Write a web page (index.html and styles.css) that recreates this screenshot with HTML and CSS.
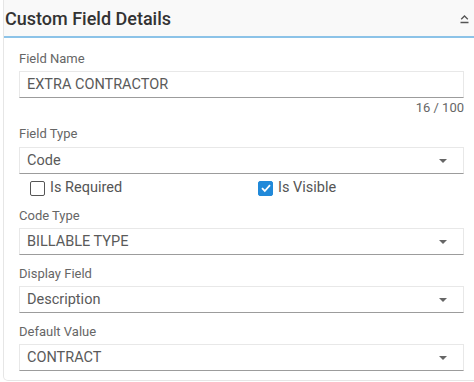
FILE: index.html
```html
<!DOCTYPE html>
<html lang="en">
<head>
<meta charset="utf-8">
<title>Custom Field Details</title>
<link rel="stylesheet" href="styles.css">
</head>
<body>
<section class="panel">
  <header class="panel-header">
    <h2 class="panel-title">Custom Field Details</h2>
    <button class="collapse" type="button" aria-label="Collapse">
      <svg width="9" height="10" viewBox="0 0 9 10"><polyline points="1.2,5.2 4.5,2 7.8,5.2" fill="none" stroke="#555" stroke-width="1.3"/><line x1="0.5" y1="8.5" x2="8.5" y2="8.5" stroke="#555" stroke-width="1.5"/></svg>
    </button>
  </header>
  <div class="panel-body">
    <div class="field">
      <div class="label">Field Name</div>
      <div class="input">EXTRA CONTRACTOR</div>
      <div class="counter">16 / 100</div>
    </div>
    <div class="field field--after-counter">
      <div class="label label--loose">Field Type</div>
      <div class="input select">Code<span class="arrow"></span></div>
    </div>
    <div class="checks">
      <label class="check"><span class="box"></span>Is Required</label>
      <label class="check check--second"><span class="box box--on"><svg width="14" height="14" viewBox="0 0 14 14"><polyline points="3,7.2 5.8,10 11,4.2" fill="none" stroke="#fff" stroke-width="1.8"/></svg></span>Is Visible</label>
    </div>
    <div class="field field--after-checks">
      <div class="label">Code Type</div>
      <div class="input select">BILLABLE TYPE<span class="arrow"></span></div>
    </div>
    <div class="field">
      <div class="label">Display Field</div>
      <div class="input select">Description<span class="arrow"></span></div>
    </div>
    <div class="field">
      <div class="label">Default Value</div>
      <div class="input select">CONTRACT<span class="arrow"></span></div>
    </div>
  </div>
</section>
</body>
</html>
```
FILE: styles.css
```css
html, body {
  margin: 0;
  padding: 0;
  background: #fff;
  overflow: hidden;
}
body {
  font-family: Roboto, "Liberation Sans", sans-serif;
  color: #555;
}
.panel {
  margin-left: 3px;
  width: 477px;
  box-sizing: border-box;
  border: 1px solid #e6e6e6;
  border-top: none;
  border-radius: 0 0 5px 5px;
  background: #fff;
}
.panel-header {
  height: 36px;
  background: #f9f9f9;
  border-bottom: 2px solid #8cc3e8;
  display: flex;
  align-items: center;
  justify-content: space-between;
  padding: 0 10px 0 1px;
}
.panel-title {
  margin: 0;
  font-size: 18px;
  font-weight: 500;
  color: #333;
  line-height: 22px;
  padding-top: 1px;
}
.collapse {
  border: none;
  background: none;
  padding: 0;
  margin-top: 1px;
  display: flex;
}
.panel-body {
  padding: 13px 15px 9px;
}
.field + .field {
  margin-top: 11px;
}
.field--after-counter {
  margin-top: 8px;
}
.field.field--after-checks {
  margin-top: 10px;
}
.label {
  font-size: 13px;
  line-height: 16px;
  color: #666;
  margin-bottom: 4px;
}
.label--loose {
  margin-bottom: 5px;
}
.input {
  height: 27px;
  box-sizing: border-box;
  border: 1px solid #e8e8e8;
  border-bottom: 1px solid #9c9c9c;
  padding: 0 7px;
  font-size: 14.5px;
  line-height: 25px;
  color: #5a5a5a;
  position: relative;
}
.arrow {
  position: absolute;
  right: 16px;
  top: 11px;
  width: 0;
  height: 0;
  border-left: 4px solid transparent;
  border-right: 4px solid transparent;
  border-top: 4px solid #666;
}
.counter {
  text-align: right;
  font-size: 13px;
  line-height: 14px;
  margin-top: 3px;
  color: #666;
}
.checks {
  display: flex;
  margin-top: 4px;
  padding-left: 11px;
}
.check {
  display: flex;
  align-items: center;
  gap: 5px;
  font-size: 14.5px;
  line-height: 20px;
  color: #555;
}
.check--second {
  margin-left: 136px;
}
.box {
  width: 15px;
  height: 15px;
  box-sizing: border-box;
  border: 1.5px solid #555;
  border-radius: 2px;
  display: flex;
  align-items: center;
  justify-content: center;
}
.box--on {
  background: #2189d9;
  border-color: #2189d9;
}
.box--on svg {
  flex: none;
}
```
